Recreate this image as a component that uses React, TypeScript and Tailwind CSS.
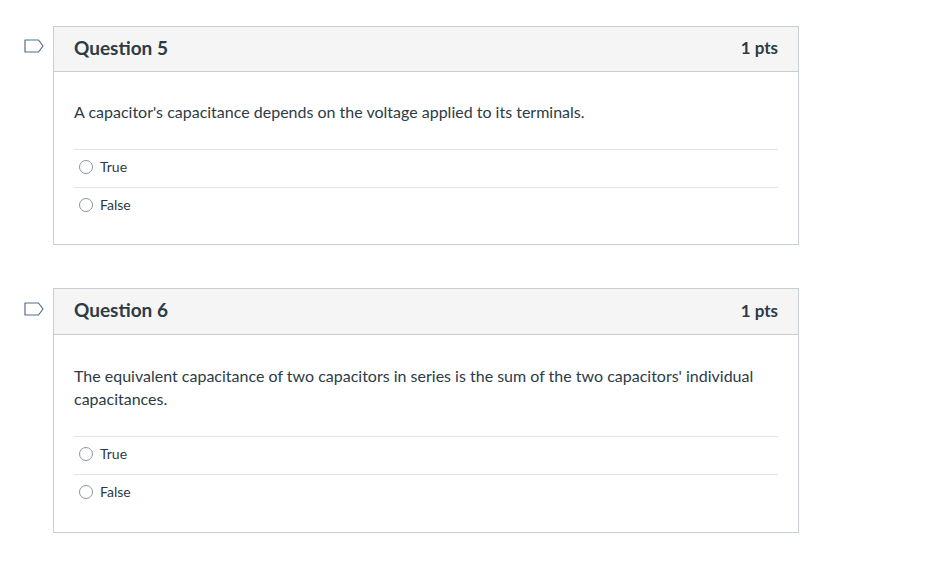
import React from "react";

function Flag() {
  return (
    <svg width="21" height="14" viewBox="0 0 21 14" className="block">
      <path d="M1 1 H14.5 L19 7 L14.5 13 H1 Z" fill="none" stroke="#4f6f8c" strokeWidth="1.2" strokeLinejoin="round" />
    </svg>
  );
}

function Answer({ label }: { label: string }) {
  return (
    <div className="flex h-[38px] items-center border-t border-[#dfe3e6] pb-[4px]">
      <span className="ml-[5px] mr-[7px] h-[14px] w-[14px] rounded-full border border-[#8d959b] bg-white" />
      <span className="text-[14px] text-[#2d3b45]">{label}</span>
    </div>
  );
}

function Question({ n, text, tall }: { n: number; text: string; tall?: boolean }) {
  return (
    <div className="flex">
      <div className={tall ? "w-[53px] shrink-0 pl-[24px] pt-[14px]" : "w-[53px] shrink-0 pl-[24px] pt-[13px]"}>
        <Flag />
      </div>
      <div className="w-[746px] border border-[#c7cdd1]">
        <div
          className={
            tall
              ? "flex h-[46px] items-center justify-between border-b border-[#c7cdd1] bg-[#f5f5f5] px-[20px] pb-[2px]"
              : "flex h-[45px] items-center justify-between border-b border-[#c7cdd1] bg-[#f5f5f5] px-[20px] pb-[2px]"
          }
        >
          <span className="text-[19px] font-bold text-[#2d3b45]">Question {n}</span>
          <span className="text-[17px] font-bold text-[#2d3b45]">1 pts</span>
        </div>
        <div className={tall ? "px-[20px] pb-[20px] pt-[29px]" : "px-[20px] pb-[19px] pt-[28px]"}>
          <p className="mb-[26px] text-[16px] leading-[23px] text-[#2d3b45]">{text}</p>
          <Answer label="True" />
          <Answer label="False" />
        </div>
      </div>
    </div>
  );
}

export default function App() {
  return (
    <div
      className="min-h-[580px] w-[949px] bg-white pt-[26px]"
      style={{ fontFamily: "Lato, 'Noto Sans', sans-serif" }}
    >
      <div className="flex flex-col gap-[43px]">
        <Question n={5} text="A capacitor's capacitance depends on the voltage applied to its terminals." />
        <Question
          n={6}
          tall
          text="The equivalent capacitance of two capacitors in series is the sum of the two capacitors' individual capacitances."
        />
      </div>
    </div>
  );
}
